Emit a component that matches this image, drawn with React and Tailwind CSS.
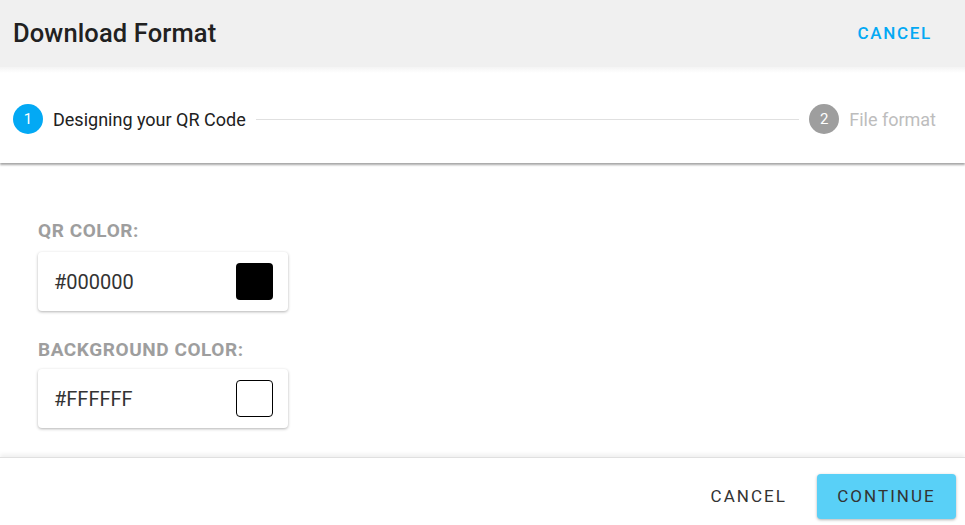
export default function App() {
  return (
    <div className="w-[965px] h-[525px] bg-white flex flex-col overflow-hidden" style={{ fontFamily: 'Roboto, "Liberation Sans", sans-serif' }}>
      {/* cabecera */}
      <div className="h-[67px] shrink-0 bg-[#f0f0f0] flex items-center justify-between pl-[13px] pr-[33px]">
        <h1 className="text-[25.5px] font-medium tracking-[0.005em] text-[#212121]">Download Format</h1>
        <button className="text-[17px] font-medium tracking-[0.1em] text-[#03a9f4]">CANCEL</button>
      </div>
      <div className="h-[6px] shrink-0 bg-gradient-to-b from-[#f4f4f4] to-white" />

      {/* stepper */}
      <div className="h-[90px] shrink-0 bg-white flex items-center pl-[13px] pr-[29px] pt-[2px] shadow-[0_2px_2px_rgba(0,0,0,0.35)] relative z-10">
        <div className="w-[30px] h-[30px] rounded-full bg-[#03a9f4] text-white text-[15px] flex items-center justify-center">1</div>
        <span className="ml-[10px] text-[18px] text-[#212121]">Designing your QR Code</span>
        <div className="flex-1 h-px bg-[#e0e0e0] mx-[10px]" />
        <div className="w-[30px] h-[30px] rounded-full bg-[#9e9e9e] text-white text-[15px] flex items-center justify-center">2</div>
        <span className="ml-[10px] text-[18px] text-[#bdbdbd]">File format</span>
      </div>

      {/* contenido */}
      <div className="flex-1 flex flex-col px-[38px] pt-[58px]">
        <label className="text-[19px] font-bold tracking-[0.03em] text-[#9e9e9e] leading-5">QR COLOR:</label>
        <div className="mt-[11px] w-[250px] h-[59px] rounded-[4px] bg-white shadow-[0_1px_3px_rgba(0,0,0,0.3)] flex items-center justify-between pl-[16px] pr-[15px]">
          <span className="text-[20px] text-[#333]">#000000</span>
          <div className="w-[37px] h-[37px] rounded-[4px] bg-black" />
        </div>
        <label className="mt-[29px] text-[19px] font-bold tracking-[0.03em] text-[#9e9e9e] leading-5">BACKGROUND COLOR:</label>
        <div className="mt-[9px] w-[250px] h-[59px] rounded-[4px] bg-white shadow-[0_1px_3px_rgba(0,0,0,0.3)] flex items-center justify-between pl-[16px] pr-[15px]">
          <span className="text-[20px] text-[#333]">#FFFFFF</span>
          <div className="w-[37px] h-[37px] rounded-[4px] bg-white border border-black" />
        </div>
      </div>

      {/* pie */}
      <div className="h-[68px] shrink-0 border-t border-[#e0e0e0] shadow-[0_-3px_4px_rgba(0,0,0,0.06)] flex items-start justify-end gap-[30px] pr-[9px] pt-[16px]">
        <button className="h-[45px] text-[17px] tracking-[0.12em] text-[#333]">CANCEL</button>
        <button className="w-[139px] h-[45px] rounded-[4px] bg-[#59d0f7] shadow-[0_1px_3px_rgba(0,0,0,0.3)] text-[17px] tracking-[0.12em] text-[#333]">CONTINUE</button>
      </div>
    </div>
  );
}
